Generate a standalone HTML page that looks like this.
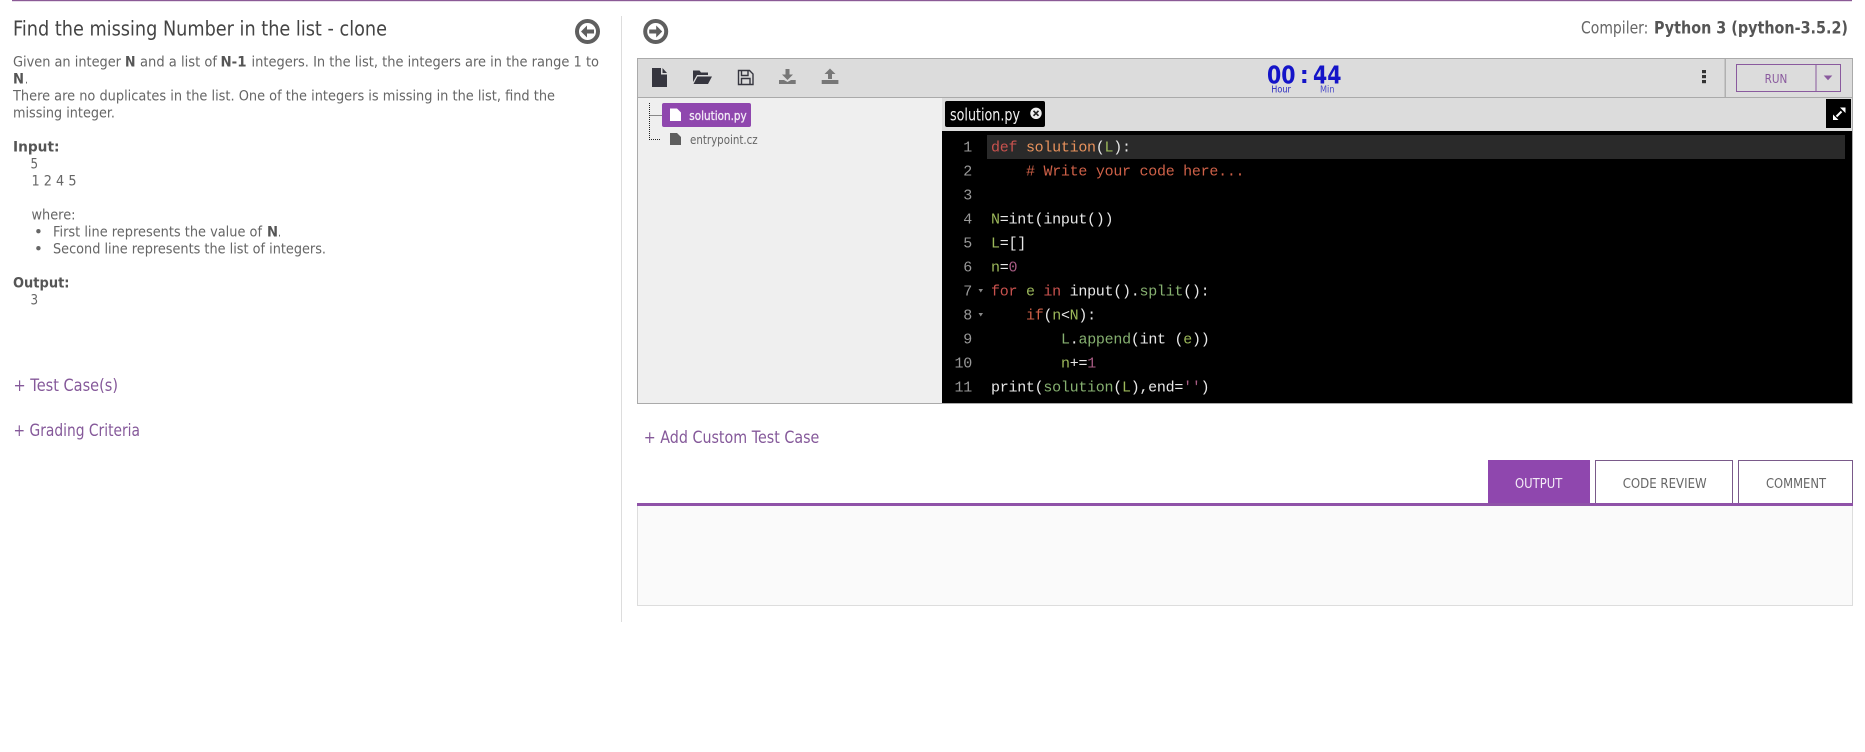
<!DOCTYPE html>
<html>
<head>
<meta charset="utf-8">
<title>Find the missing Number in the list - clone</title>
<style>
html,body{margin:0;padding:0;background:#fff;width:1865px;height:752px;overflow:hidden}
svg{display:block}
text{font-family:"DejaVu Sans","Liberation Sans",sans-serif;white-space:pre}
.b{font-size:14px;fill:#666}
.bb{font-size:14px;fill:#555;font-weight:bold}
.lk{font-size:16.5px;fill:#85599a}
.m{font-family:"Liberation Mono",monospace;font-size:15px;letter-spacing:-.27px;fill:#e8e8e8}
.n{font-family:"Liberation Mono",monospace;font-size:15px;letter-spacing:-.27px;fill:#999;text-anchor:end}
.r{fill:#c9524e}.o{fill:#e8925c}.g{fill:#9cb85a}.c{fill:#cf6148}.p{fill:#a85c84}.a{fill:#86b070}
</style>
</head>
<body>
<svg width="1865" height="752" viewBox="0 0 1865 752" xmlns="http://www.w3.org/2000/svg">
<rect x="12" y="0" width="1840" height="1.2" fill="#8b5a96"/>

<!-- left -->
<text x="13" y="35.5" font-size="20" fill="#444" textLength="374" lengthAdjust="spacingAndGlyphs">Find the missing Number in the list - clone</text>
<circle cx="587.500" cy="31.5" r="10.5" fill="none" stroke="#5f5f5f" stroke-width="4"/>
<path d="M581 31.5l6-6v4h7v4h-7v4z" fill="#5f5f5f"/>
<rect x="621" y="16" width="1" height="606" fill="#ddd"/>

<text class="b" x="13" y="66.7" textLength="108" lengthAdjust="spacingAndGlyphs">Given an integer</text>
<text class="bb" x="125" y="66.7" textLength="10.5" lengthAdjust="spacingAndGlyphs">N</text>
<text class="b" x="140" y="66.7" textLength="77" lengthAdjust="spacingAndGlyphs">and a list of</text>
<text class="bb" x="220.5" y="66.7" textLength="26" lengthAdjust="spacingAndGlyphs">N-1</text>
<text class="b" x="251.5" y="66.7" textLength="347.500" lengthAdjust="spacingAndGlyphs">integers. In the list, the integers are in the range 1 to</text>
<text class="bb" x="13" y="83.7" textLength="11" lengthAdjust="spacingAndGlyphs">N</text>
<text class="b" x="25" y="83.7" textLength="3" lengthAdjust="spacingAndGlyphs">.</text>
<text class="b" x="13" y="100.7" textLength="542" lengthAdjust="spacingAndGlyphs">There are no duplicates in the list. One of the integers is missing in the list, find the</text>
<text class="b" x="13" y="117.7" textLength="102" lengthAdjust="spacingAndGlyphs">missing integer.</text>
<text class="bb" x="13" y="151.7" textLength="46.5" lengthAdjust="spacingAndGlyphs">Input:</text>
<text class="b" x="30.5" y="168.7" textLength="7.6" lengthAdjust="spacingAndGlyphs">5</text>
<text class="b" x="31.5" y="185.7" textLength="45" lengthAdjust="spacingAndGlyphs">1 2 4 5</text>
<text class="b" x="31.5" y="219.7" textLength="44" lengthAdjust="spacingAndGlyphs">where:</text>
<circle cx="38.4" cy="231.2" r="2.2" fill="#666"/>
<text class="b" x="53" y="236.7" textLength="209" lengthAdjust="spacingAndGlyphs">First line represents the value of</text>
<text class="bb" x="267" y="236.7" textLength="11" lengthAdjust="spacingAndGlyphs">N</text>
<text class="b" x="278" y="236.7" textLength="3" lengthAdjust="spacingAndGlyphs">.</text>
<circle cx="38.4" cy="248.2" r="2.2" fill="#666"/>
<text class="b" x="53" y="253.7" textLength="273" lengthAdjust="spacingAndGlyphs">Second line represents the list of integers.</text>
<text class="bb" x="13" y="287.7" textLength="56.5" lengthAdjust="spacingAndGlyphs">Output:</text>
<text class="b" x="30.5" y="304.7" textLength="7.6" lengthAdjust="spacingAndGlyphs">3</text>

<text class="lk" x="13.500" y="391" textLength="104.500" lengthAdjust="spacingAndGlyphs">+ Test Case(s)</text>
<text class="lk" x="13.500" y="436" textLength="126.500" lengthAdjust="spacingAndGlyphs">+ Grading Criteria</text>

<!-- right header -->
<circle cx="655.7" cy="31.5" r="10.5" fill="none" stroke="#5f5f5f" stroke-width="4"/>
<path d="M662.2 31.5l-6-6v4h-7v4h7v4z" fill="#5f5f5f"/>
<text x="1581" y="33.5" font-size="16.5" fill="#666" textLength="67.4" lengthAdjust="spacingAndGlyphs">Compiler:</text>
<text x="1654" y="33.5" font-size="16.5" font-weight="bold" fill="#555" textLength="194" lengthAdjust="spacingAndGlyphs">Python 3 (python-3.5.2)</text>

<!-- panel -->
<rect x="637.5" y="58.5" width="1215" height="345" fill="#efefef" stroke="#aaa"/>
<rect x="638" y="59" width="1214" height="38" fill="#dcdcdc"/>
<rect x="638" y="97" width="1214" height="1" fill="#aaa"/>
<rect x="942" y="98" width="910" height="33" fill="#dcdcdc"/>
<rect x="942" y="131" width="910" height="272" fill="#000"/>

<!-- toolbar icons -->
<path d="M652 68h9v6.5h6V87h-15z" fill="#36363f"/>
<path d="M662.5 68l4.5 5h-4.5z" fill="#36363f"/>
<path d="M693 82V70.5h6.5l1.5 2h7v2.5H697z" fill="#36363f"/>
<path d="M693.5 84l4-7.5h14.5l-4 7.5z" fill="#36363f"/>
<path d="M738.5 70.5h11l3.5 3.5v10.5h-14.5zM741.5 71v4.5h6.5V71M741.5 84.5v-6h8.5v6" fill="none" stroke="#36363f" stroke-width="1.4"/>
<path d="M785.5 69h4v5.5h3.5l-5.5 5.5-5.5-5.500h3.500z" fill="#777"/>
<path d="M779 80h5l3.500 2 3.500-2h4.700v4H779z" fill="#777"/>
<path d="M828 79v-5h-3.500l5.500-5.500 5.500 5.500h-3.500v5z" fill="#777"/>
<path d="M821.700 80h16.700v4h-16.700z" fill="#777"/>

<!-- timer -->
<text x="1267" y="83.5" font-size="24.500" font-weight="bold" fill="#1414c8" textLength="28.5" lengthAdjust="spacingAndGlyphs">00</text>
<rect x="1302.300" y="70" width="4" height="4" fill="#1414c8"/>
<rect x="1302.300" y="79" width="4" height="4" fill="#1414c8"/>
<text x="1313" y="83.5" font-size="24.500" font-weight="bold" fill="#1414c8" textLength="28.500" lengthAdjust="spacingAndGlyphs">44</text>
<text x="1271.300" y="92.700" font-size="9.500" fill="#2a2ac0" textLength="19.500" lengthAdjust="spacingAndGlyphs">Hour</text>
<text x="1320" y="92.700" font-size="9.500" fill="#4a4ac8" textLength="14.500" lengthAdjust="spacingAndGlyphs">Min</text>

<!-- dots, run -->
<rect x="1702" y="70" width="4" height="3.200" fill="#333"/>
<rect x="1702" y="75" width="4" height="3.200" fill="#333"/>
<rect x="1702" y="80" width="4" height="3.200" fill="#333"/>
<rect x="1724.500" y="59" width="1.500" height="38" fill="#b0b0b0"/>
<rect x="1736.500" y="64.500" width="104" height="27" fill="none" stroke="#8a5a9e"/>
<rect x="1815.500" y="65" width="1" height="26" fill="#8a5a9e"/>
<text x="1764.600" y="83" font-size="12.500" fill="#8a5a9e" textLength="22.700" lengthAdjust="spacingAndGlyphs">RUN</text>
<path d="M1823.700 75.500h8.600l-4.300 4.800z" fill="#8a5a9e"/>

<!-- tree -->
<path d="M649.500 103V139.500H661M649.500 115.500H662" fill="none" stroke="#222" stroke-width="1" stroke-dasharray="1 1"/>
<rect x="662" y="103" width="89" height="24" rx="2" fill="#8f47ae"/>
<path d="M670 108.500h7l4 4V121h-11z" fill="#fff"/>
<text x="689.300" y="120" font-size="12.500" fill="#f4ecf7" stroke="#f4ecf7" stroke-width=".3" textLength="57.400" lengthAdjust="spacingAndGlyphs">solution.py</text>
<path d="M670 133h7l4 4v8h-11z" fill="#5e5e5e"/>
<text x="690" y="144" font-size="12.500" fill="#666" textLength="67.700" lengthAdjust="spacingAndGlyphs">entrypoint.cz</text>

<!-- editor tab -->
<rect x="945" y="101" width="100" height="26" rx="2" fill="#000"/>
<text x="950" y="120.500" font-size="16.500" fill="#f2f2f2" textLength="70" lengthAdjust="spacingAndGlyphs">solution.py</text>
<circle cx="1036" cy="113.300" r="5.700" fill="#eee"/>
<path d="M1033.500 110.800l5 5M1038.500 110.800l-5 5" stroke="#222" stroke-width="1.700"/>
<rect x="1826" y="99" width="25" height="29" fill="#000"/>
<path d="M1836.500 116.500l5-5" stroke="#fff" stroke-width="2"/>
<path d="M1840 107.500h5.500v5.500zM1833 120v-5.500l5.500 5.500z" fill="#fff"/>

<!-- code -->
<rect x="987" y="135" width="858" height="24" fill="#2a2a2a"/>
<text class="n" x="972" y="151.5">1</text>
<text class="n" x="972" y="175.5">2</text>
<text class="n" x="972" y="199.5">3</text>
<text class="n" x="972" y="223.5">4</text>
<text class="n" x="972" y="247.5">5</text>
<text class="n" x="972" y="271.5">6</text>
<text class="n" x="972" y="295.5">7</text>
<text class="n" x="972" y="319.5">8</text>
<text class="n" x="972" y="343.5">9</text>
<text class="n" x="972" y="367.5">10</text>
<text class="n" x="972" y="391.5">11</text>
<path d="M978.500 289h4.500l-2.250 3.500zM978.500 313h4.500l-2.250 3.500z" fill="#888"/>

<text class="m" x="991" y="151.5"><tspan class="r">def</tspan> <tspan class="o">solution</tspan>(<tspan class="g">L</tspan>):</text>
<text class="m c" x="1026" y="175.5"># Write your code here...</text>
<text class="m" x="991" y="223.5"><tspan class="g">N</tspan>=int(input())</text>
<text class="m" x="991" y="247.5"><tspan class="g">L</tspan>=[]</text>
<text class="m" x="991" y="271.5"><tspan class="g">n</tspan>=<tspan class="p">0</tspan></text>
<text class="m" x="991" y="295.5"><tspan class="r">for</tspan> <tspan class="g">e</tspan> <tspan class="r">in</tspan> input().<tspan class="a">split</tspan>():</text>
<text class="m" x="1026" y="319.5"><tspan class="c">if</tspan>(<tspan class="g">n</tspan>&lt;<tspan class="g">N</tspan>):</text>
<text class="m" x="1061" y="343.5"><tspan class="a">L</tspan>.<tspan class="a">append</tspan>(int (<tspan class="g">e</tspan>))</text>
<text class="m" x="1061" y="367.5"><tspan class="g">n</tspan>+=<tspan class="p">1</tspan></text>
<text class="m" x="991" y="391.5">print(<tspan class="a">solution</tspan>(<tspan class="g">L</tspan>),end=<tspan class="p">''</tspan>)</text>

<!-- custom test -->
<text class="lk" x="643.800" y="443" textLength="175.500" lengthAdjust="spacingAndGlyphs">+ Add Custom Test Case</text>

<!-- tabs -->
<rect x="1488" y="460" width="102" height="44" fill="#8f47ae"/>
<text x="1515" y="488" font-size="13" fill="#f4ecf7" textLength="47.300" lengthAdjust="spacingAndGlyphs">OUTPUT</text>
<rect x="1595.500" y="460.500" width="137" height="44" fill="#fff" stroke="#7a5a8a"/>
<text x="1622.700" y="488" font-size="13" fill="#666" textLength="84" lengthAdjust="spacingAndGlyphs">CODE REVIEW</text>
<rect x="1738.500" y="460.500" width="114" height="44" fill="#fff" stroke="#7a5a8a"/>
<text x="1766" y="488" font-size="13" fill="#666" textLength="60" lengthAdjust="spacingAndGlyphs">COMMENT</text>

<!-- output -->
<rect x="637.500" y="505.500" width="1215" height="100" fill="#fafafa" stroke="#ddd"/>
<rect x="637" y="503" width="1216" height="3" fill="#8f52a8"/>
</svg>
</body>
</html>
